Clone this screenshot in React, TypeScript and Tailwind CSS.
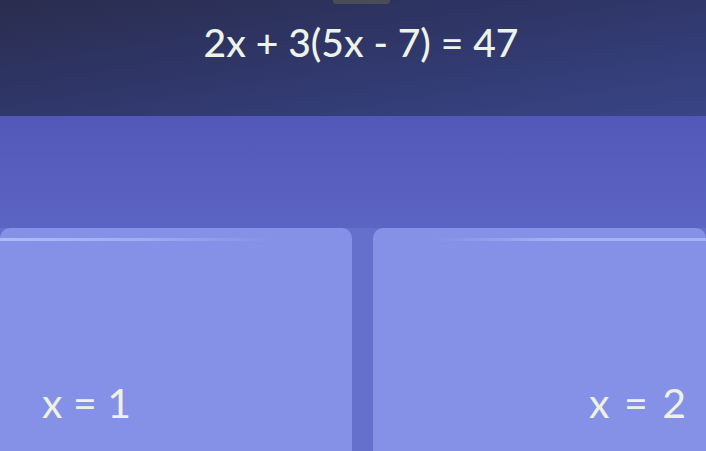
import React from 'react';

const font = { fontFamily: 'Lato, "Open Sans", sans-serif' };

function AnswerCard({ label, align }: { label: string; align: 'left' | 'right' }) {
  return (
    <div
      className={`relative flex flex-col rounded-t-[10px] bg-[#8591e6] ${
        align === 'left' ? 'w-[352px] shrink-0' : 'flex-1'
      }`}
    >
      <div
        className={`mt-[10px] h-[3px] ${
          align === 'left'
            ? 'bg-gradient-to-r from-[#aebcf6] via-[#a0aef2] to-transparent mr-[80px]'
            : 'bg-gradient-to-r from-transparent via-[#a6b4f4] to-[#a6b4f4] ml-[60px]'
        }`}
      />
      <div
        className={`flex-1 flex items-end pb-[28px] ${
          align === 'left' ? 'justify-start pl-[42px]' : 'justify-end pr-[20px]'
        }`}
      >
        <span
          className={`text-[41px] leading-none text-[#eef2e4] ${
            align === 'right' ? 'tracking-[2px] -mr-[2px]' : ''
          }`}
          style={font}
        >
          {label}
        </span>
      </div>
    </div>
  );
}

export default function App() {
  return (
    <div className="relative w-[706px] h-[451px] overflow-hidden flex flex-col bg-[#6570cc]">
      <div className="absolute left-[333px] top-0 w-[57px] h-[4px] rounded-b-[3px] bg-[#4a4c58]" />
      <div className="h-[116px] flex justify-center pt-[23px] pl-[16px] bg-gradient-to-br from-[#2a2d4e] via-[#30376a] to-[#384586]">
        <span className="text-[39px] leading-none text-[#eef3ea] font-medium" style={font}>
          2x + 3(5x - 7) = 47
        </span>
      </div>
      <div className="h-[112px] bg-gradient-to-b from-[#5158b8] to-[#5d65c4]" />
      <div className="flex-1 flex gap-[21px]">
        <AnswerCard label="x = 1" align="left" />
        <AnswerCard label="x = 2" align="right" />
      </div>
    </div>
  );
}
